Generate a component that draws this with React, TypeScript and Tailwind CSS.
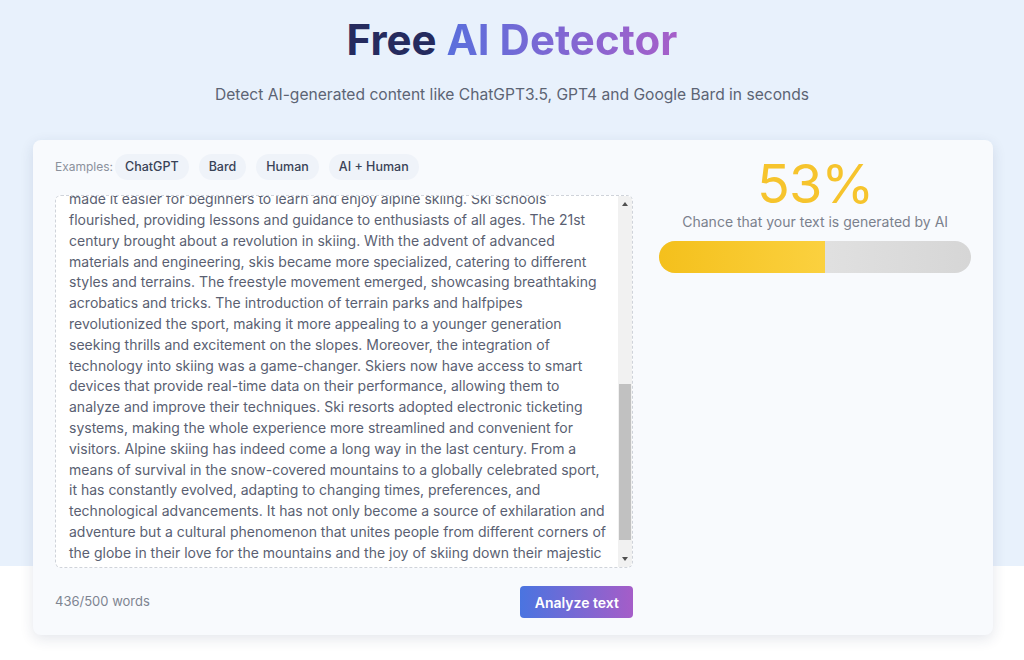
import { useEffect, useRef, useState } from "react";

const EXAMPLES = ["ChatGPT", "Bard", "Human", "AI + Human"];

const SAMPLE_TEXT =
  "Alpine skiing has a rich and fascinating history that spans over a century. In the early 1900s, skiing was primarily a means of transportation in snowy regions, used by hunters, soldiers, and villagers to travel across the mountains during the long winter months. The equipment was simple and heavy, consisting of long wooden planks and leather bindings that offered little control. As the sport gained popularity, enthusiasts began to explore the thrill of descending steep slopes for pleasure rather than necessity. In the 1920s and 1930s, pioneers such as Mathias Zdarsky and Hannes Schneider developed new techniques that allowed skiers to turn and stop with greater precision. The Arlberg technique, in particular, became the foundation of modern ski instruction. The first Winter Olympic Games, held in Chamonix in 1924, introduced the world to competitive skiing, and alpine events were added in 1936. After the Second World War, skiing experienced a tremendous boom. Returning soldiers who had trained in mountain divisions brought their skills and passion home, founding ski resorts across Europe and North America. The invention of the chairlift and other mechanical lifts transformed the sport, allowing skiers to reach the summit quickly and enjoy more runs in a single day. Innovations in equipment followed, with metal and fiberglass skis replacing wood, and safety bindings reducing the risk of injury. Groomed trails, better snow conditions, and the arrival of snowmaking machines made it easier for beginners to learn and enjoy alpine skiing. Ski schools flourished, providing lessons and guidance to enthusiasts of all ages. The 21st century brought about a revolution in skiing. With the advent of advanced materials and engineering, skis became more specialized, catering to different styles and terrains. The freestyle movement emerged, showcasing breathtaking acrobatics and tricks. The introduction of terrain parks and halfpipes revolutionized the sport, making it more appealing to a younger generation seeking thrills and excitement on the slopes. Moreover, the integration of technology into skiing was a game-changer. Skiers now have access to smart devices that provide real-time data on their performance, allowing them to analyze and improve their techniques. Ski resorts adopted electronic ticketing systems, making the whole experience more streamlined and convenient for visitors. Alpine skiing has indeed come a long way in the last century. From a means of survival in the snow-covered mountains to a globally celebrated sport, it has constantly evolved, adapting to changing times, preferences, and technological advancements. It has not only become a source of exhilaration and adventure but a cultural phenomenon that unites people from different corners of the globe in their love for the mountains and the joy of skiing down their majestic slopes.";

const AI_SCORE = 53;
const ARROW_H = 16;

function ScoreBar({ value }: { value: number }) {
  return (
    <div className="h-8 w-full overflow-hidden rounded-full bg-[linear-gradient(to_right,#ececec,#d6d6d6)]">
      <div
        className="h-full bg-[linear-gradient(to_right,#f4c01c,#fbd13f)]"
        style={{ width: `${value}%` }}
      />
    </div>
  );
}

type Thumb = { top: number; height: number };

function ScrollRail({ thumb }: { thumb: Thumb }) {
  return (
    <div className="relative flex w-[14px] shrink-0 flex-col justify-between bg-[#f1f1f1]">
      <div className="flex h-4 items-center justify-center">
        <div className="h-0 w-0 border-x-[3.5px] border-b-[4px] border-x-transparent border-b-[#505050]" />
      </div>
      <div
        className="absolute left-[1px] right-[1px] bg-[#c1c1c1]"
        style={{ top: thumb.top, height: thumb.height }}
      />
      <div className="flex h-4 items-center justify-center">
        <div className="h-0 w-0 border-x-[3.5px] border-t-[4px] border-x-transparent border-t-[#505050]" />
      </div>
    </div>
  );
}

export default function App() {
  const textRef = useRef<HTMLTextAreaElement>(null);
  const [thumb, setThumb] = useState<Thumb>({ top: 184, height: 160 });

  const syncThumb = () => {
    const el = textRef.current;
    if (!el) return;
    const track = el.clientHeight - ARROW_H * 2;
    setThumb({
      top: ARROW_H + (track * el.scrollTop) / el.scrollHeight,
      height: (track * el.clientHeight) / el.scrollHeight,
    });
  };

  useEffect(() => {
    const el = textRef.current;
    if (!el) return;
    el.scrollTop = el.scrollHeight - el.clientHeight - 25;
    syncThumb();
  }, []);

  return (
    <div className="min-h-[660px] bg-[linear-gradient(to_bottom,#e8f1fc_566px,#ffffff_566px)] pt-4 font-['Inter',sans-serif]">
      <h1 className="text-center text-[42px] font-bold leading-[48px] text-[#252b5e]">
        Free{" "}
        <span className="bg-[linear-gradient(to_right,#5a6fdc,#a65fc9)] bg-clip-text text-transparent">
          AI Detector
        </span>
      </h1>
      <p className="mt-[19px] text-center text-[15.6px] leading-6 text-[#5c6474]">
        Detect AI-generated content like ChatGPT3.5, GPT4 and Google Bard in seconds
      </p>

      <div className="ml-[33px] mt-[33px] flex w-[960px] gap-[26px] rounded-lg bg-[#f8fafd] px-[22px] pb-[17px] pt-[14px] shadow-[0_4px_14px_rgba(30,50,90,0.12)]">
        <div className="flex w-[579px] flex-col">
          <div className="flex h-[26px] items-center gap-[10px]">
            <span className="mr-[-8px] text-[12px] text-[#8b919c]">Examples:</span>
            {EXAMPLES.map((label) => (
              <button
                key={label}
                type="button"
                className="h-[26px] rounded-full bg-[#eff3f9] px-[10px] text-[12.5px] font-medium text-[#394256]"
              >
                {label}
              </button>
            ))}
          </div>

          <div className="mt-[15px] flex h-[373px] overflow-hidden rounded-md border border-dashed border-[#cfd3da] bg-white">
            <textarea
              ref={textRef}
              defaultValue={SAMPLE_TEXT}
              onScroll={syncThumb}
              className="h-full min-w-0 flex-1 resize-none overflow-hidden bg-white py-2 pl-[13px] pr-[9px] font-['Inter',sans-serif] text-[14px] leading-[20.8px] text-[#5a5f72] outline-none"
            />
            <ScrollRail thumb={thumb} />
          </div>

          <div className="mt-[18px] flex items-center justify-between">
            <span className="text-[13px] text-[#7e8491]">436/500 words</span>
            <button
              type="button"
              className="h-8 w-[113px] rounded-[4px] bg-[linear-gradient(to_right,#4a74e0,#a55dc8)] text-[14px] font-semibold text-white"
            >
              Analyze text
            </button>
          </div>
        </div>

        <div className="flex w-[312px] flex-col items-center">
          <div className="mt-[2px] text-[54px] leading-[56px] tracking-[-1px] text-[#f6c42d]">
            {AI_SCORE}%
          </div>
          <p className="text-[14px] leading-5 text-[#7b818d]">
            Chance that your text is generated by AI
          </p>
          <div className="mt-[9px] w-full">
            <ScoreBar value={AI_SCORE} />
          </div>
        </div>
      </div>
    </div>
  );
}
